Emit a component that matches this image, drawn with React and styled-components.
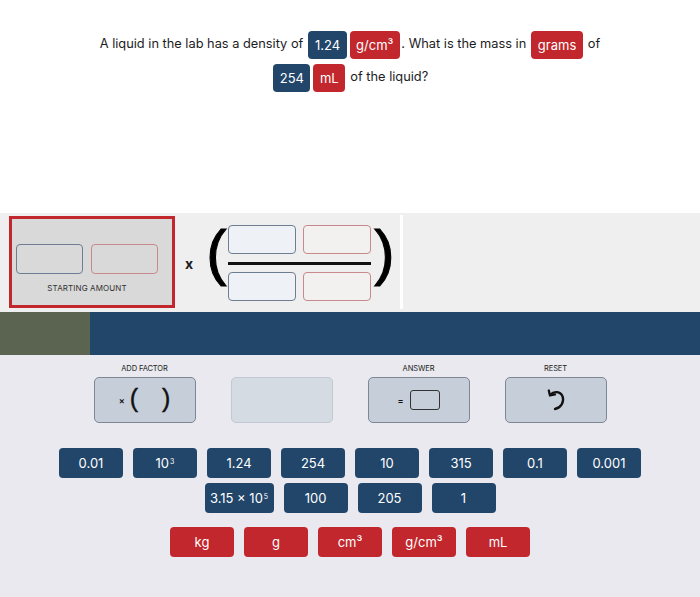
import React from "react";
import styled, { createGlobalStyle } from "styled-components";

const Global = createGlobalStyle`
  html, body { margin: 0; padding: 0; background: #ffffff; }
  body { font-family: Inter, "Liberation Sans", Arial, sans-serif; color: #1c1c1e; }
`;

const BLUE = "#22466a";
const RED = "#c1272d";

const Page = styled.div`
  width: 700px;
  height: 597px;
  display: flex;
  flex-direction: column;
  overflow: hidden;
`;

const Question = styled.div`
  height: 213px;
  box-sizing: border-box;
  padding: 27px 0 0 0;
  text-align: center;
  font-size: 12.8px;
  line-height: 33px;
`;

const QLine = styled.div`
  white-space: nowrap;
`;

const Chip = styled.span`
  display: inline-block;
  background: ${(p) => (p.$red ? RED : BLUE)};
  color: #fff;
  border-radius: 4px;
  height: 28px;
  line-height: 28px;
  padding: 0 6.5px;
  margin: 0 1.5px;
  vertical-align: middle;
  font-size: 13px;
`;

const Band = styled.div`
  height: 99px;
  background: #efefef;
  display: flex;
  align-items: stretch;
`;

const StartBox = styled.div`
  margin: 3px 0 4px 9px;
  width: 166px;
  box-sizing: border-box;
  border: 3px solid ${RED};
  background: #d9d9d9;
  display: flex;
  flex-direction: column;
  align-items: flex-start;
  padding: 25px 0 0 4px;
`;

const StartInner = styled.div`
  display: flex;
  flex-direction: column;
  align-items: center;
`;

const SlotRow = styled.div`
  display: flex;
  gap: ${(p) => p.$gap || 8}px;
`;

const Slot = styled.div`
  width: ${(p) => p.$w || 67}px;
  height: ${(p) => p.$h || 30}px;
  box-sizing: border-box;
  border-radius: 4px;
  border: 1.5px solid ${(p) => (p.$red ? "#c8898c" : "#6f7d92")};
  background: ${(p) => (p.$fill ? (p.$red ? "#f3f0f0" : "#eef1f5") : "transparent")};
`;

const StartLabel = styled.div`
  margin-top: 9px;
  font-size: 8px;
  letter-spacing: 0.1px;
  color: #333;
`;

const Times = styled.div`
  width: 24px;
  display: flex;
  align-items: center;
  justify-content: center;
  font-size: 14px;
  font-weight: 700;
  margin-left: 2px;
  padding-top: 2px;
`;

const Paren = styled.div`
  width: 27px;
  display: flex;
  align-items: center;
  justify-content: center;
  font-family: "Liberation Sans", Arial, sans-serif;
  font-size: 61px;
  font-weight: 400;
  line-height: 1;
  padding-bottom: 20px;
  padding-left: ${(p) => (p.$left ? 4 : 0)}px;
  box-sizing: border-box;
  -webkit-text-stroke: 1.1px #000;
  color: #000;
`;

const Fraction = styled.div`
  display: flex;
  flex-direction: column;
  justify-content: center;
`;

const FracLine = styled.div`
  height: 3px;
  background: #111;
  margin: 8px 0 7px;
`;

const Divider = styled.div`
  width: 3px;
  background: #ffffff;
  margin: 2px 0 3px 2px;
`;

const Bar = styled.div`
  height: 43px;
  display: flex;
`;

const BarSeg = styled.div`
  width: ${(p) => p.$w || "auto"};
  flex: ${(p) => (p.$w ? "none" : 1)};
  background: ${(p) => p.$c};
`;

const Lower = styled.div`
  flex: 1;
  background: #e9e9ef;
  display: flex;
  flex-direction: column;
  align-items: center;
  padding-top: 9px;
`;

const Tools = styled.div`
  display: flex;
  gap: 35px;
`;

const Tool = styled.div`
  width: 102px;
  display: flex;
  flex-direction: column;
  align-items: center;
`;

const ToolLabel = styled.div`
  height: 13px;
  font-size: 7.5px;
  color: #222;
  letter-spacing: -0.1px;
`;

const ToolButton = styled.div`
  width: 102px;
  height: 46px;
  box-sizing: border-box;
  border-radius: 5px;
  border: 1.5px solid ${(p) => (p.$faint ? "#c3c9d1" : "#7d8796")};
  background: ${(p) => (p.$faint ? "#d5dbe3" : "#c6ced9")};
  display: flex;
  align-items: center;
  justify-content: center;
  gap: ${(p) => p.$gap || 6}px;
  color: #111;
`;

const Small = styled.span`
  font-size: 9px;
  font-weight: 600;
`;

const BigParen = styled.span`
  font-family: "Liberation Sans", Arial, sans-serif;
  font-size: 25px;
  font-weight: 400;
  line-height: 1;
  margin-top: -3px;
  -webkit-text-stroke: 0.4px #111;
`;

const ParenGap = styled.span`
  width: 14px;
`;

const AnswerBox = styled.div`
  width: 30px;
  height: 20px;
  box-sizing: border-box;
  border: 1.5px solid #333;
  border-radius: 3px;
`;

const Rows = styled.div`
  display: flex;
  flex-direction: column;
  align-items: center;
  margin-top: 25px;
`;

const Row = styled.div`
  display: flex;
  gap: 10px;
  margin-top: ${(p) => p.$mt || 0}px;
`;

const Tile = styled.div`
  width: ${(p) => p.$w || 64}px;
  height: 30px;
  border-radius: 4px;
  background: ${(p) => (p.$red ? RED : BLUE)};
  color: #fff;
  font-size: 13px;
  display: flex;
  align-items: center;
  justify-content: center;
`;

const Sup = styled.sup`
  font-size: 7px;
  vertical-align: top;
  position: relative;
  top: -2px;
  margin-left: 1px;
`;

const UndoIcon = () => (
  <svg width="22" height="26" viewBox="0 0 22 26" fill="none" stroke="#111" strokeWidth="2.3" strokeLinecap="round" strokeLinejoin="round">
    <path d="M5.5 7.5 C9 3.8 15.5 4.3 17.6 9.5 C19.6 14.8 15.8 20.8 10 22" />
    <path d="M3.8 3.5 L5 8.5 L10 7.4" />
  </svg>
);

const numbers1 = ["0.01", "10³", "1.24", "254", "10", "315", "0.1", "0.001"];

export default function App() {
  return (
    <Page>
      <Global />
      <Question>
        <QLine>
          A liquid in the lab has a density of <Chip>1.24</Chip>
          <Chip $red>g/cm³</Chip>. What is the mass in <Chip $red>grams</Chip> of
        </QLine>
        <QLine>
          <Chip>254</Chip>
          <Chip $red>mL</Chip> of the liquid?
        </QLine>
      </Question>
      <Band>
        <StartBox>
          <StartInner>
            <SlotRow>
              <Slot />
              <Slot $red />
            </SlotRow>
            <StartLabel>STARTING AMOUNT</StartLabel>
          </StartInner>
        </StartBox>
        <Times>x</Times>
        <Paren $left>(</Paren>
        <Fraction>
          <SlotRow $gap={7}>
            <Slot $w={68} $h={29} $fill />
            <Slot $w={68} $h={29} $red $fill />
          </SlotRow>
          <FracLine />
          <SlotRow $gap={7}>
            <Slot $w={68} $h={29} $fill />
            <Slot $w={68} $h={29} $red $fill />
          </SlotRow>
        </Fraction>
        <Paren>)</Paren>
        <Divider />
      </Band>
      <Bar>
        <BarSeg $w="90px" $c="#5b6450" />
        <BarSeg $c={BLUE} />
      </Bar>
      <Lower>
        <Tools>
          <Tool>
            <ToolLabel>ADD FACTOR</ToolLabel>
            <ToolButton $gap={5}>
              <Small>×</Small>
              <BigParen>(</BigParen>
              <ParenGap />
              <BigParen>)</BigParen>
            </ToolButton>
          </Tool>
          <Tool>
            <ToolLabel />
            <ToolButton $faint />
          </Tool>
          <Tool>
            <ToolLabel>ANSWER</ToolLabel>
            <ToolButton>
              <Small>=</Small>
              <AnswerBox />
            </ToolButton>
          </Tool>
          <Tool>
            <ToolLabel>RESET</ToolLabel>
            <ToolButton>
              <UndoIcon />
            </ToolButton>
          </Tool>
        </Tools>
        <Rows>
          <Row>
            {numbers1.map((n) =>
              n === "10³" ? (
                <Tile key={n}>
                  10<Sup>3</Sup>
                </Tile>
              ) : (
                <Tile key={n}>{n}</Tile>
              )
            )}
          </Row>
          <Row $mt={5}>
            <Tile $w={69}>
              3.15 × 10<Sup>5</Sup>
            </Tile>
            <Tile>100</Tile>
            <Tile>205</Tile>
            <Tile>1</Tile>
          </Row>
          <Row $mt={14}>
            <Tile $red>kg</Tile>
            <Tile $red>g</Tile>
            <Tile $red>cm³</Tile>
            <Tile $red>g/cm³</Tile>
            <Tile $red>mL</Tile>
          </Row>
        </Rows>
      </Lower>
    </Page>
  );
}
